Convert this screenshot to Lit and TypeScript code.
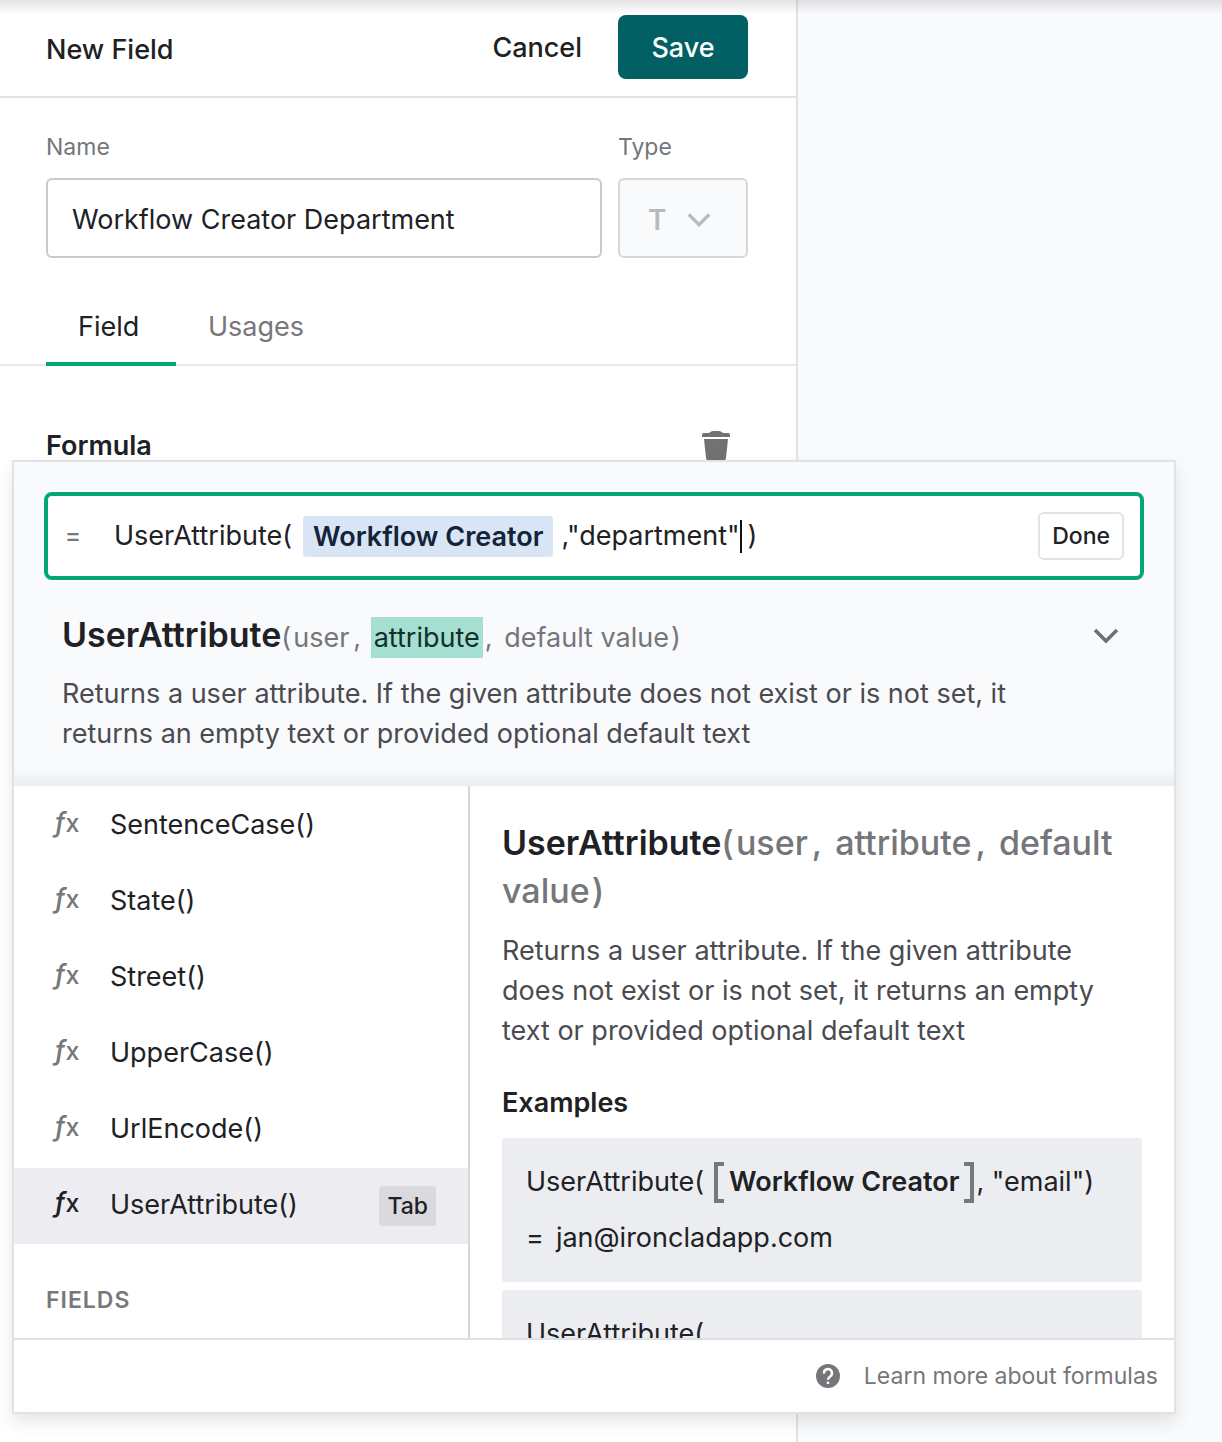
import { LitElement, html, css, svg, nothing } from "lit";
import { customElement, property, state } from "lit/decorators.js";
import { classMap } from "lit/directives/class-map.js";

const FUNCTIONS = ["SentenceCase", "State", "Street", "UpperCase", "UrlEncode", "UserAttribute"];
const SUMMARY =
  "Returns a user attribute. If the given attribute does not exist or is not set, it returns an empty text or provided optional default text";

const chevron = svg`<path d="M2 2 L13 13 L24 2" fill="none" stroke="currentColor" stroke-width="3.6" />`;

@customElement("function-signature")
class FunctionSignature extends LitElement {
  @property() name = "";
  @property({ attribute: false }) params: string[] = [];
  @property() active = "";

  static styles = css`
    :host {
      display: block;
      color: #75767a;
    }
    .name {
      color: #202124;
      font-size: 34px;
      font-weight: 600;
    }
    .param {
      padding: 0 2px;
    }
    .active {
      padding: 4px 3px;
      background: #a5dfd2;
      color: #10302b;
    }
    .comma {
      padding: 0 2px;
    }
  `;

  render() {
    const last = this.params.length - 1;
    return html`<span class="name">${this.name}</span>(${this.params.map(
      (p, i) =>
        html`<span class=${classMap({ param: true, active: p === this.active })}>${p}</span>${i < last
            ? html`<span class="comma">,</span> `
            : nothing}`
    )})`;
  }
}

@customElement("formula-popup")
class FormulaPopup extends LitElement {
  @state() private selected = "UserAttribute";
  private params = ["user", "attribute", "default value"];

  static styles = css`
    :host {
      display: block;
      border: 2px solid #e1e2e4;
      background: #fff;
      box-shadow: 0 8px 16px rgba(0, 0, 0, 0.1);
    }
    *,
    *::before,
    *::after {
      box-sizing: border-box;
    }
    button {
      font: inherit;
      color: inherit;
      cursor: pointer;
    }
    .top {
      padding: 30px 30px 32px;
      background: linear-gradient(to top, #ebedef, #f9fafc 18px);
    }
    .editor {
      display: flex;
      align-items: center;
      height: 88px;
      padding: 0 16px 0 17px;
      border: 4px solid #06a574;
      border-radius: 8px;
      background: #fff;
    }
    .equals {
      width: 49px;
      color: #77787a;
      font-size: 24px;
      font-weight: 500;
    }
    .formula {
      flex: 1;
      display: flex;
      align-items: center;
      outline: none;
      white-space: pre;
    }
    .chip {
      margin: 0 8px 0 11px;
      padding: 0 10px;
      line-height: 41px;
      border-radius: 4px;
      background: #d8e5f5;
      color: #12233a;
      font-weight: 600;
    }
    .caret {
      width: 2px;
      height: 33px;
      margin-right: 6px;
      background: #111;
    }
    .done {
      height: 48px;
      padding: 0 12px;
      border: 2px solid #e3e3e5;
      border-radius: 6px;
      background: #fff;
      font-size: 23px;
      font-weight: 500;
    }
    .sig-row {
      display: flex;
      align-items: center;
      justify-content: space-between;
      height: 48px;
      margin-top: 32px;
      padding: 0 22px 0 18px;
      line-height: 48px;
    }
    .toggle {
      display: flex;
      padding: 0;
      border: 0;
      background: none;
      color: #6f7073;
    }
    .toggle svg {
      width: 30px;
      height: 18px;
    }
    p {
      margin: 0;
      line-height: 40px;
      color: #4a4b50;
    }
    .top p {
      margin: 14px 100px 0 18px;
    }
    .body {
      display: grid;
      grid-template-columns: 456fr 704fr;
      height: 552px;
    }
    .list {
      border-right: 2px solid #d6d7d9;
      padding-top: 2px;
      overflow: hidden;
    }
    .item {
      display: flex;
      align-items: center;
      width: 100%;
      height: 76px;
      padding: 0 32px 2px 40px;
      border: 0;
      background: none;
      text-align: left;
    }
    .item.on {
      background: #ececf1;
    }
    .fx {
      width: 56px;
      padding-bottom: 6px;
      color: #77787a;
      font-size: 25px;
      font-weight: 500;
      line-height: 32px;
    }
    .on .fx {
      color: #202124;
    }
    .fx i {
      font-size: 28px;
    }
    .label {
      flex: 1;
    }
    kbd {
      margin-top: 2px;
      padding: 0 8px;
      border-radius: 3px;
      background: #d9d9de;
      font: inherit;
      font-size: 23px;
      font-weight: 500;
      line-height: 40px;
    }
    h3 {
      margin: 40px 32px 0;
      color: #77787a;
      font-size: 23px;
      font-weight: 600;
      line-height: 32px;
      letter-spacing: 1px;
    }
    .docs {
      padding: 33px 32px 0;
      overflow: hidden;
    }
    .docs function-signature {
      font-size: 34px;
      font-weight: 500;
      line-height: 48px;
    }
    .docs p {
      margin-top: 16px;
    }
    h4 {
      margin: 32px 0 15px;
      font-size: 27px;
      font-weight: 600;
      line-height: 40px;
    }
    .example {
      margin-bottom: 8px;
      padding: 16px 24px;
      border-radius: 3px;
      background: #ecedf1;
      line-height: 56px;
    }
    .call {
      display: flex;
      align-items: center;
      white-space: pre;
    }
    .ref {
      display: flex;
      align-items: center;
      height: 41px;
      margin: 0 2px 0 10px;
      font-weight: 600;
    }
    .ref::before,
    .ref::after {
      content: "";
      width: 10px;
      height: 41px;
      border: 4px solid #77787c;
    }
    .ref::before {
      margin-right: 5px;
      border-right: 0;
    }
    .ref::after {
      margin-left: 5px;
      border-left: 0;
    }
    .eq {
      margin-right: 12px;
    }
    footer {
      display: flex;
      justify-content: flex-end;
      padding: 16px;
      border-top: 2px solid #dfe0e2;
      font-size: 23px;
      line-height: 40px;
    }
    footer a {
      display: flex;
      align-items: center;
      gap: 24px;
      color: #757679;
      text-decoration: none;
    }
    footer svg {
      width: 24px;
      height: 24px;
    }
  `;

  render() {
    return html`
      <section class="top">
        <div class="editor">
          <span class="equals">=</span>
          <div class="formula" role="textbox" aria-label="Formula" tabindex="0">
            <span>UserAttribute(</span><span class="chip">Workflow Creator</span><span>,"department"</span><span class="caret"></span><span>)</span>
          </div>
          <button class="done" type="button">Done</button>
        </div>
        <div class="sig-row">
          <function-signature name="UserAttribute" .params=${this.params} active="attribute"></function-signature>
          <button class="toggle" type="button" aria-label="Collapse">
            <svg viewBox="-1 -1 30 18">${chevron}</svg>
          </button>
        </div>
        <p>${SUMMARY}</p>
      </section>
      <div class="body">
        <div class="list">
          ${FUNCTIONS.map(
            (f) => html`<button
              type="button"
              class=${classMap({ item: true, on: f === this.selected })}
              @click=${() => (this.selected = f)}
            >
              <span class="fx" aria-hidden="true"><i>ƒ</i>x</span>
              <span class="label">${f}()</span>
              ${f === this.selected ? html`<kbd>Tab</kbd>` : nothing}
            </button>`
          )}
          <h3>FIELDS</h3>
        </div>
        <div class="docs">
          <function-signature name="UserAttribute" .params=${this.params}></function-signature>
          <p>${SUMMARY}</p>
          <h4>Examples</h4>
          <div class="example">
            <div class="call"><span>UserAttribute(</span><span class="ref">Workflow Creator</span><span>, "email")</span></div>
            <div><span class="eq">=</span>jan@ironcladapp.com</div>
          </div>
          <div class="example">
            <div class="call">UserAttribute(</div>
          </div>
        </div>
      </div>
      <footer>
        <a href="#formulas">
          <svg viewBox="0 0 24 24" aria-hidden="true">
            <circle cx="12" cy="12" r="12" fill="currentColor" />
            <path d="M8 9.6 A4 4 0 1 1 14.2 12.4 C12.600 13.4 12 14 12 15.8" fill="none" stroke="#fff" stroke-width="2.400" />
            <rect x="10.8" y="17.600" width="2.400" height="2.400" fill="#fff" />
          </svg>
          Learn more about formulas
        </a>
      </footer>
    `;
  }
}

@customElement("app-root")
class AppRoot extends LitElement {
  @state() private tab = "Field";

  static styles = css`
    :host {
      display: block;
      position: relative;
      min-height: 100vh;
      overflow: hidden;
      background: #f9fafc;
      color: #202124;
      font-family: Inter, "Liberation Sans", sans-serif;
      font-size: 27px;
      line-height: 40px;
    }
    * {
      box-sizing: border-box;
    }
    .page {
      display: grid;
      grid-template-columns: 399fr 212fr;
      min-height: 100vh;
    }
    .panel {
      border-right: 2px solid #e2e3e5;
      background: #fff;
    }
    .shade {
      position: absolute;
      top: 0;
      left: 0;
      right: 0;
      height: 14px;
      background: linear-gradient(rgba(0, 0, 0, 0.11), rgba(0, 0, 0, 0));
    }
    header {
      display: flex;
      align-items: center;
      padding: 15px 48px 17px 46px;
      border-bottom: 2px solid #e2e3e5;
    }
    h1,
    h2 {
      flex: 1;
      margin: 0;
      font-size: 27px;
      font-weight: 600;
    }
    h1 {
      font-weight: 500;
      padding-top: 6px;
    }
    button,
    input,
    select {
      font: inherit;
      color: inherit;
      margin: 0;
    }
    button {
      border: 0;
      background: none;
      cursor: pointer;
    }
    .cancel {
      padding: 2px 36px 0;
      font-weight: 500;
    }
    .save {
      width: 130px;
      height: 64px;
      padding-top: 2px;
      border-radius: 8px;
      background: #025f63;
      color: #fff;
      font-weight: 500;
    }
    .fields {
      display: grid;
      grid-template-columns: 1fr 130px;
      column-gap: 16px;
      row-gap: 11px;
      padding: 29px 48px 0 46px;
    }
    label {
      color: #757679;
      font-size: 23px;
    }
    input,
    select {
      width: 100%;
      height: 80px;
      padding: 2px 24px 0;
      border: 2px solid #c9cacc;
      border-radius: 6px;
      background: #fff;
    }
    .type {
      position: relative;
    }
    select {
      appearance: none;
      padding: 4px 28px 0;
      border-color: #d6d7d9;
      background: #f9fafb;
      color: #b9babb;
      font-size: 28px;
      font-weight: 600;
      opacity: 1;
    }
    .type svg {
      position: absolute;
      left: 69px;
      top: 34px;
      width: 24px;
      height: 16px;
      color: #b9babb;
      pointer-events: none;
    }
    .tabs {
      display: flex;
      margin-top: 30px;
      padding-left: 46px;
      border-bottom: 2px solid #e8e9eb;
    }
    .tab {
      min-width: 130px;
      height: 78px;
      margin-bottom: -2px;
      padding: 4px 32px 0;
      border-bottom: 4px solid transparent;
      color: #77787b;
      text-align: left;
    }
    .tab.on {
      border-color: #06a574;
      color: #202124;
    }
    .formula-head {
      display: flex;
      align-items: center;
      padding: 60px 66px 0 46px;
    }
    .trash {
      display: flex;
      padding: 0;
      color: #717274;
    }
    .trash svg {
      width: 28px;
      height: 30px;
    }
    formula-popup {
      position: absolute;
      top: 460px;
      left: 12px;
      right: 46px;
    }
  `;

  render() {
    return html`
      <div class="page">
        <main class="panel">
          <header>
            <h1>New Field</h1>
            <button class="cancel" type="button">Cancel</button>
            <button class="save" type="button">Save</button>
          </header>
          <div class="fields">
            <label for="name">Name</label>
            <label for="type">Type</label>
            <input id="name" type="text" value="Workflow Creator Department" />
            <div class="type">
              <select id="type" disabled>
                <option>T</option>
              </select>
              <svg viewBox="0 0 26 16" aria-hidden="true">${chevron}</svg>
            </div>
          </div>
          <nav class="tabs">
            ${["Field", "Usages"].map(
              (t) => html`<button
                type="button"
                class=${classMap({ tab: true, on: t === this.tab })}
                @click=${() => (this.tab = t)}
              >
                ${t}
              </button>`
            )}
          </nav>
          <div class="formula-head">
            <h2>Formula</h2>
            <button class="trash" type="button" aria-label="Delete formula">
              <svg viewBox="0 0 28 30">
                <path
                  fill="currentColor"
                  d="M0 6 V4 Q0 2 2 2 H7 Q9 0 11 0 H17 Q19 0 21 2 H26 Q28 2 28 4 V6 Z M2 8 H26 L24 27 Q23.5 30 20 30 H8 Q4.500 30 4 27 Z"
                />
              </svg>
            </button>
          </div>
        </main>
      </div>
      <formula-popup></formula-popup>
      <div class="shade"></div>
    `;
  }
}
